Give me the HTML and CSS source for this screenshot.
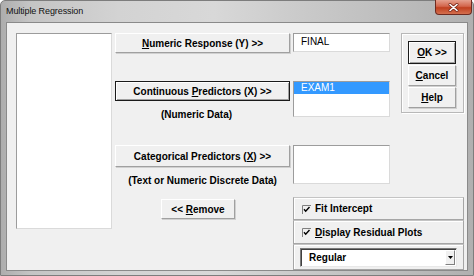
FILE: index.html
```html
<!DOCTYPE html>
<html lang="en">
<head>
  <meta charset="UTF-8" />
  <title>Multiple Regression</title>
  <link rel="stylesheet" href="styles.css">
</head>
<body>

  <div class="window">
    <div class="titlebar">
      <span class="title">Multiple Regression</span>
      <div class="close">
        <svg width="11" height="9" viewBox="0 0 11 9">
          <path d="M2 1.5 L9 7.5 M9 1.5 L2 7.5" stroke="#7a2a1c" stroke-width="3" stroke-linecap="round" />
          <path d="M2 1.5 L9 7.5 M9 1.5 L2 7.5" stroke="#fff" stroke-width="1.6" stroke-linecap="round" />
        </svg>
      </div>
    </div>

    <div class="client">
      <div class="box varlist"></div>

      <button class="btn pick resp"><u>N</u>umeric Response (Y) &gt;&gt;</button>
      <div class="box final">FINAL</div>

      <div class="group">
        <button class="btn side default"><u>O</u>K &gt;&gt;</button>
        <button class="btn side"><u>C</u>ancel</button>
        <button class="btn side"><u>H</u>elp</button>
      </div>

      <button class="btn pick cont default">Continuous <u>P</u>redictors (X) &gt;&gt;</button>
      <div class="box exam"><div class="sel">EXAM1</div></div>
      <div class="note n1">(Numeric Data)</div>

      <button class="btn pick cat">Categorical Predictors (<u>X</u>) &gt;&gt;</button>
      <div class="box catlist"></div>
      <div class="note n2">(Text or Numeric Discrete Data)</div>

      <button class="btn remove">&lt;&lt; <u>R</u>emove</button>

      <div class="options">
        <div class="opt">
          <svg class="chk" width="9" height="9" viewBox="0 0 9 9">
            <path d="M0.5 9 V0.5 H9" stroke="#808080" fill="none" />
            <path d="M2 4.2 L3.7 6.2 L7.5 2" stroke="#000" stroke-width="1.4" fill="none" />
          </svg>
          <span>Fit Intercept</span>
        </div>
        <div class="opt">
          <svg class="chk" width="9" height="9" viewBox="0 0 9 9">
            <path d="M0.5 9 V0.5 H9" stroke="#808080" fill="none" />
            <path d="M2 4.2 L3.7 6.2 L7.5 2" stroke="#000" stroke-width="1.4" fill="none" />
          </svg>
          <span><u>D</u>isplay Residual Plots</span>
        </div>
        <div class="opt combo-row">
          <div class="combo">
            <span>Regular</span>
            <div class="arrow">
              <svg width="5" height="3" viewBox="0 0 5 3"><path d="M0 0 H5 L2.5 3 Z" fill="#000" /></svg>
            </div>
          </div>
        </div>
      </div>
    </div>
  </div>

</body>
</html>
```

FILE: styles.css
```css
/* Reset & base */
* {
  margin: 0; padding: 0; box-sizing: border-box;
}
body {
  width: 474px;
  height: 276px;
  overflow: hidden;
  background: #fff;
  font-family: "Liberation Sans", Arial, sans-serif;
  color: #000;
}

/* window frame */
.window {
  width: 474px;
  height: 276px;
  display: flex;
  flex-direction: column;
  border: 1px solid #7d7d7d;
  border-radius: 5px 5px 0 0;
  padding: 0 5px 4px;
  background: linear-gradient(90deg, #adadad, #c4c4c4 6%, #d3d3d3 25%, #d8d8d8 45%, #c9c9c9 65%, #bcbcbc 85%, #b0b0b0);
}

.titlebar {
  height: 21px;
  display: flex;
  justify-content: space-between;
  align-items: flex-start;
}
.title {
  font-size: 9px;
  line-height: 21px;
  color: #111;
  letter-spacing: -0.1px;
}
.close {
  width: 37px;
  height: 15px;
  margin: -1px -4px 0 0;
  display: flex;
  align-items: center;
  justify-content: center;
  border: 1px solid #6e2b20;
  border-top: none;
  border-radius: 0 0 4px 4px;
  background: linear-gradient(#e5a08e, #d3664c 45%, #c0401f 55%, #d4704f);
}

/* dialog body */
.client {
  flex: 1;
  background: #f0f0f0;
  border: 1px solid #8a8a8a;
  padding: 10px 0 0 9px;
  display: grid;
  grid-template-columns: 96px 175px 97px 71px;
  grid-template-rows: 20px 28px 21px 15px 28px 23px 16px 13px 23px 24px 26px;
  column-gap: 3px;
  font-size: 10px;
  font-weight: 700;
}

.box {
  background: #fff;
  border: 1px solid;
  border-color: #9c9c9c #dadada #dadada #9c9c9c;
  align-self: start;
  font-weight: 400;
}
.varlist { grid-column: 1; grid-row: 1 / 11; height: 196px; }
.final {
  grid-column: 3; grid-row: 1;
  height: 19px;
  padding-left: 7px;
  line-height: 15px;
}
.exam { grid-column: 3; grid-row: 3 / 5; height: 36px; }
.exam .sel {
  background: #3399ff;
  color: #fff;
  height: 12px;
  line-height: 12px;
  padding-left: 7px;
}
.catlist { grid-column: 3; grid-row: 6 / 8; height: 39px; }

/* buttons */
.btn {
  font: 700 10px "Liberation Sans", Arial, sans-serif;
  color: #000;
  background: #f0f0f0;
  border: 1px solid;
  border-color: #fff #a0a0a0 #a0a0a0 #fff;
  box-shadow: 1px 1px 0 #d0d0d0;
  align-self: start;
}
.btn.default {
  border: 1px solid #1a1a1a;
  box-shadow: inset 1px 1px #fff, inset -1px -1px #a0a0a0;
}
.pick { height: 20px; }
.resp { grid-column: 2; grid-row: 1; }
.cont { grid-column: 2; grid-row: 3; }
.cat { grid-column: 2; grid-row: 6; height: 22px; }
.remove {
  grid-column: 2; grid-row: 9;
  justify-self: start;
  width: 74px;
  height: 20px;
  margin: 2px 0 0 46px;
}

.note {
  grid-column: 2;
  text-align: center;
  line-height: 14px;
  margin-top: 6px;
}
.n1 { grid-row: 4 / 6; padding-right: 12px; }
.n2 { grid-row: 7 / 9; margin-top: 6px; }

/* OK / Cancel / Help */
.group {
  grid-column: 4; grid-row: 1 / 5;
  align-self: start;
  margin-left: 8px;
  height: 80px;
  border: 1px solid #b8b8b8;
  box-shadow: inset 1px 1px #fff, 1px 1px #fff;
  padding: 7px 0 0 6px;
  display: flex;
  flex-direction: column;
  gap: 1px;
}
.side {
  width: 48px;
  height: 21px;
}
.side.default { height: 23px; }

/* option panel */
.options {
  grid-column: 3 / 5; grid-row: 9 / 12;
  display: grid;
  grid-template-rows: 23px 24px 26px;
}
.opt {
  border: 1px solid;
  border-color: #c4c4c4 #a6a6a6 #a6a6a6 #a6a6a6;
  box-shadow: inset 1px 1px #fff;
  display: flex;
  align-items: center;
  gap: 4px;
  padding-left: 8px;
}
.chk { margin-top: 1px; }
.combo-row { padding: 0 6px 0 6px; }
.combo {
  flex: 1;
  height: 19px;
  background: #fff;
  border: 1px solid;
  border-color: #7a7a7a #e8e8e8 #e8e8e8 #7a7a7a;
  box-shadow: inset 1px 1px #404040;
  display: flex;
  align-items: center;
  justify-content: space-between;
  padding: 0 1px 0 8px;
}
.arrow {
  width: 10px;
  height: 15px;
  background: #f0f0f0;
  border: 1px solid;
  border-color: #fff #808080 #808080 #fff;
  display: flex;
  align-items: center;
  justify-content: center;
}
```
